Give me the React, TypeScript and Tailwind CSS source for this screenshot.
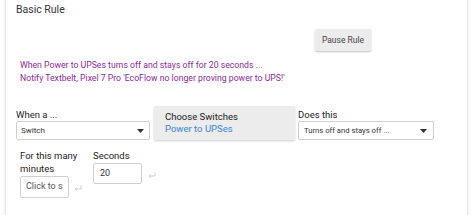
import React from "react";

const Caret = () => (
  <svg width="7" height="4" viewBox="0 0 7 4" className="shrink-0">
    <path d="M0 0h7L3.5 4z" fill="#333" />
  </svg>
);

const EnterIcon = () => (
  <svg width="8" height="7" viewBox="0 0 8 7" className="shrink-0">
    <path d="M7 0.5v3.5H1.5M3 2.3L1.2 4 3 5.7" fill="none" stroke="#c8c8c8" strokeWidth="0.9" />
  </svg>
);

export default function App() {
  return (
    <div className="w-[474px] h-[215px] overflow-hidden bg-white" style={{ fontFamily: "Roboto, 'Noto Sans', sans-serif" }}>
      <div className="ml-[5px] w-[463px] h-[230px] -mt-[2px] bg-white border-x border-[#ececec] shadow-[0_1px_3px_rgba(0,0,0,0.12)] pl-[10px] pt-[5px]">
        <div className="text-[10.5px] leading-[13px] text-[#333]">Basic Rule</div>
        <div className="flex mt-[13px]">
          <button className="ml-[299px] w-[56px] h-[22px] bg-[#ececec] rounded-[2px] shadow-[0_1px_2px_rgba(0,0,0,0.25)] text-[8.5px] text-[#444]">
            Pause Rule
          </button>
        </div>
        <div className="mt-[8px] pl-[4px] text-[8.7px] leading-[13px] text-[#8a2a9a]">
          <div>When Power to UPSes turns off and stays off for 20 seconds ...</div>
          <div>Notify Textbelt, Pixel 7 Pro 'EcoFlow no longer proving power to UPS!'</div>
        </div>
        <div className="flex items-end mt-[21px]">
          <div className="flex flex-col">
            <div className="text-[9.5px] leading-[12px] text-[#222]">When a ...</div>
            <div className="w-[134px] h-[19px] border border-[#cfcfcf] rounded-[2px] flex items-center justify-between pl-[4px] pr-[5px] text-[8px] text-[#333]">
              <span>Switch</span>
              <Caret />
            </div>
          </div>
          <div className="ml-[4px] w-[141px] h-[34px] bg-[#ececec] shadow-[0_1px_2px_rgba(0,0,0,0.2)] pl-[11px] pt-[5px] text-[9.5px] leading-[12px]">
            <div className="text-[#222]">Choose Switches</div>
            <div className="text-[#3a84d6]">Power to UPSes</div>
          </div>
          <div className="ml-[3px] flex flex-col">
            <div className="text-[9.5px] leading-[12px] text-[#222]">Does this</div>
            <div className="w-[136px] h-[19px] border border-[#cfcfcf] rounded-[2px] flex items-center justify-between pl-[5px] pr-[6px] text-[7.7px] text-[#333]">
              <span>Turns off and stays off ...</span>
              <Caret />
            </div>
          </div>
        </div>
        <div className="flex items-start mt-[9px] pl-[4px] gap-[11px]">
          <div className="flex flex-col w-[62px]">
            <div className="text-[9.5px] leading-[13px] text-[#222]">For this many minutes</div>
            <div className="mt-[1px] flex items-end gap-[5px]">
              <div className="w-[49px] h-[22px] border border-[#cfcfcf] rounded-[2px] flex items-center pl-[5px] text-[9px] text-[#555] overflow-hidden whitespace-nowrap">
                Click to s
              </div>
              <div className="mb-[6px]"><EnterIcon /></div>
            </div>
          </div>
          <div className="flex flex-col">
            <div className="text-[9.5px] leading-[13px] text-[#222]">Seconds</div>
            <div className="mt-[1px] flex items-end gap-[6px]">
              <div className="w-[49px] h-[21px] border border-[#cfcfcf] rounded-[2px] flex items-center pl-[6px] text-[9px] text-[#333]">
                20
              </div>
              <div className="mb-[5px]"><EnterIcon /></div>
            </div>
          </div>
        </div>
      </div>
    </div>
  );
}
